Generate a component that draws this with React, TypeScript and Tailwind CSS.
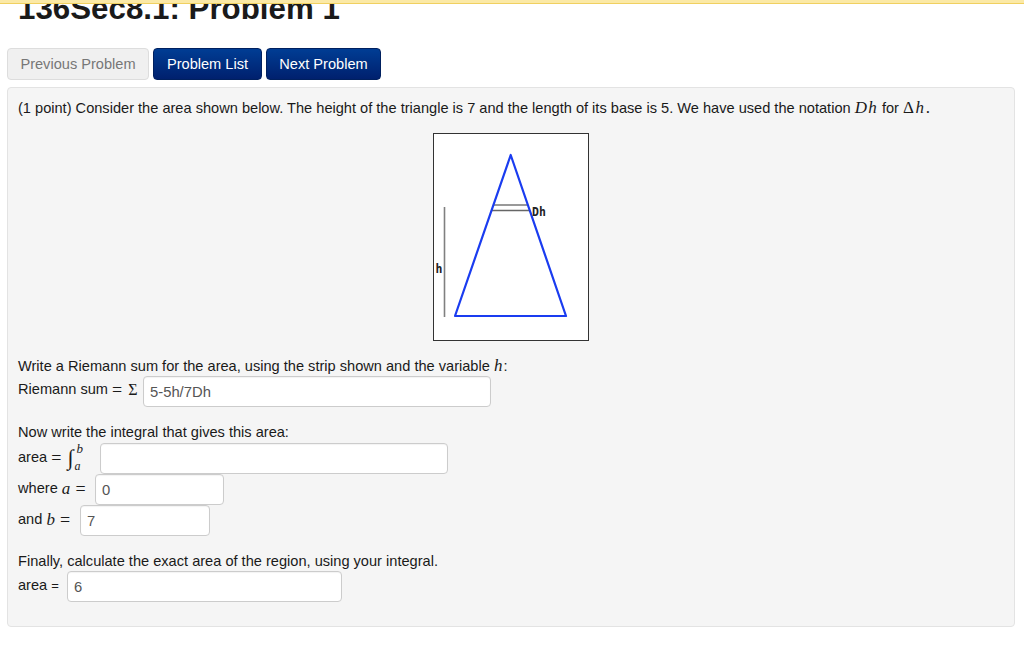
const sans = "font-['Liberation_Sans',Arial,sans-serif]";

function M({ children }: { children: React.ReactNode }) {
  return <span className="font-['Liberation_Serif',serif] italic text-[17px] tracking-[1.2px]">{children}</span>;
}
function Eq() {
  return <span className="font-['Liberation_Serif',serif] text-[18px] leading-[18px] mx-[4px]">=</span>;
}
function Field({ value, w }: { value?: string; w: string }) {
  return (
    <div className={`${w} h-[31px] shrink-0 rounded-[4px] border border-[#cccccc] bg-white px-[6px] pt-[2px] flex items-center text-[14.8px] text-[#555555] shadow-[inset_0_1px_1px_rgba(0,0,0,0.05)]`}>
      {value}
    </div>
  );
}
function Btn({ children, w }: { children: React.ReactNode; w: string }) {
  return (
    <div className={`${w} h-[32px] pt-[1px] flex items-center justify-center rounded-[4px] border border-[#00205f] bg-gradient-to-b from-[#003d94] to-[#00206e] text-white text-[14.6px]`}>
      {children}
    </div>
  );
}
function Diagram() {
  return (
    <svg width="156" height="208" viewBox="0 0 156 208" className="block">
      <rect x="0.5" y="0.5" width="155" height="207" fill="#fff" stroke="#333" strokeWidth="1" />
      <line x1="11.5" y1="74" x2="11.5" y2="184" stroke="#808080" strokeWidth="1.6" />
      <line x1="60" y1="72" x2="94" y2="72" stroke="#777" strokeWidth="1.4" />
      <line x1="59" y1="77.5" x2="96" y2="77.5" stroke="#666" strokeWidth="1.4" />
      <path d="M77.7 22 L133 183 L22 183 Z" fill="none" stroke="#1a3cf0" strokeWidth="2.2" strokeLinejoin="round" />
      <text x="2.5" y="140" fontFamily="'DejaVu Sans Mono', monospace" fontWeight="bold" fontSize="11.5" fill="#222">h</text>
      <text x="99" y="83" fontFamily="'DejaVu Sans Mono', monospace" fontWeight="bold" fontSize="11.5" fill="#222">Dh</text>
    </svg>
  );
}

export default function App() {
  return (
    <div className={`${sans} w-[1024px] h-[648px] overflow-hidden bg-white text-[#1a1a1a] text-[14.6px]`}>
      <div className="h-[4px] bg-[#fbe9a6] border-b border-[#f0d060]" />
      <div className="h-[24px] overflow-hidden relative">
        <h1 className="absolute left-[18px] bottom-[1px] text-[31.3px] leading-[36px] font-bold text-[#1a1a1a] whitespace-nowrap">136Sec8.1: Problem 1</h1>
      </div>
      <div className="flex gap-[4px] pl-[7px] mt-[20px]">
        <div className="w-[142px] h-[32px] pt-[1px] flex items-center justify-center rounded-[4px] border border-[#dddddd] bg-[#f0f0f0] text-[#777777]">Previous Problem</div>
        <Btn w="w-[109px]">Problem List</Btn>
        <Btn w="w-[115px]">Next Problem</Btn>
      </div>
      <div className="mx-[7px] mt-[7px] h-[540px] w-[1008px] rounded-[4px] border border-[#e3e3e3] bg-[#f5f5f5] pl-[10px] pt-[10px]">
        <div className="h-[20px] leading-[20px] whitespace-nowrap">
          (1 point) Consider the area shown below. The height of the triangle is 7 and the length of its base is 5. We have used the notation <M>Dh</M> for <span className="font-['Liberation_Serif',serif] text-[17px] tracking-[1.6px]">Δ<i>h</i>.</span>
        </div>
        <div className="mt-[15px] flex justify-center pr-[10px]">
          <Diagram />
        </div>
        <div className="mt-[15px] h-[20px] leading-[20px] whitespace-nowrap">
          Write a Riemann sum for the area, using the strip shown and the variable <M>h</M>:
        </div>
        <div className="flex items-center h-[31px]">
          <span className="whitespace-nowrap w-[125px] flex items-center pb-[3px]">Riemann sum<Eq /><span className="font-['Liberation_Serif',serif] text-[16px] ml-[2px]">Σ</span></span>
          <Field w="w-[348px]" value="5-5h/7Dh" />
        </div>
        <div className="mt-[15px] h-[20px] leading-[20px]">Now write the integral that gives this area:</div>
        <div className="flex items-center h-[31px] mt-[1px]">
          <span className="whitespace-nowrap flex items-center w-[82px] pb-[2px]">
            area<Eq />
            <span className="relative font-['Liberation_Serif',serif] italic text-[22px] inline-block ml-[2px] w-[20px] h-[24px] leading-[24px]">
              ∫
              <span className="absolute left-[9px] top-[-3px] text-[13px] leading-[12px]">b</span>
              <span className="absolute left-[7px] top-[14px] text-[12px] leading-[12px]">a</span>
            </span>
          </span>
          <Field w="w-[348px]" />
        </div>
        <div className="flex items-center h-[31px]">
          <span className="whitespace-nowrap w-[77px] flex items-center pb-[1px]">where&nbsp;<M>a</M><Eq /></span>
          <Field w="w-[129px]" value="0" />
        </div>
        <div className="flex items-center h-[31px]">
          <span className="whitespace-nowrap w-[62px] flex items-center pb-[1px]">and&nbsp;<M>b</M><Eq /></span>
          <Field w="w-[130px]" value="7" />
        </div>
        <div className="mt-[15px] h-[20px] leading-[20px]">Finally, calculate the exact area of the region, using your integral.</div>
        <div className="flex items-center h-[31px]">
          <span className="whitespace-nowrap w-[49px] pb-[2px]">area <span className="text-[13px]">=</span></span>
          <Field w="w-[275px]" value="6" />
        </div>
      </div>
    </div>
  );
}
